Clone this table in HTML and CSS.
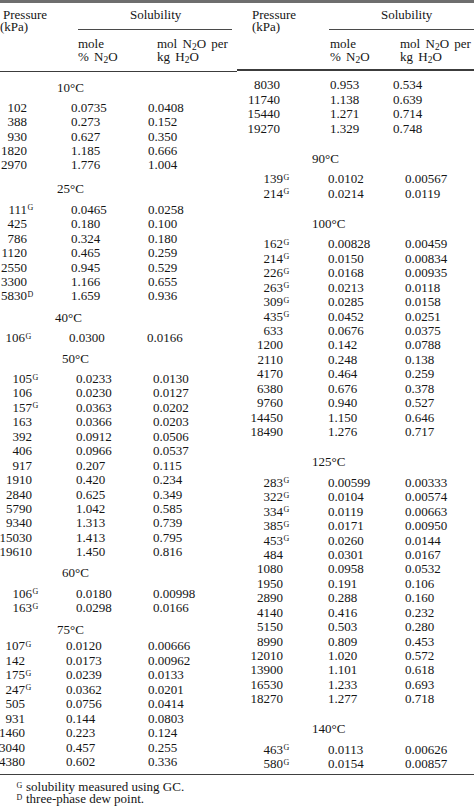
FILE: index.html
```html
<!DOCTYPE html>
<html>
<head>
<meta charset="utf-8">
<link rel="stylesheet" href="styles.css">
</head>
<body>
<div class="page">
  <div class="band"></div>
  <div class="halves">
    <section class="half left">
      <div class="head">
        <div class="hp">Pressure<span class="kpa">(kPa)</span></div>
        <div class="hs">Solubility</div>
        <div class="hm">mole<br>% N<span class="sb">2</span>O</div>
        <div class="hm">mol N<span class="sb">2</span>O per<br>kg H<span class="sb">2</span>O</div>
      </div>
      <div class="hrule"></div>
      <div class="body">
        <div class="block l-a">
          <div class="temp t-first">10°C</div>
          <div class="r"><span class="p">102</span><span class="m"></span><span class="v">0.0735</span><span class="v">0.0408</span></div>
          <div class="r"><span class="p">388</span><span class="m"></span><span class="v">0.273</span><span class="v">0.152</span></div>
          <div class="r"><span class="p">930</span><span class="m"></span><span class="v">0.627</span><span class="v">0.350</span></div>
          <div class="r"><span class="p">1820</span><span class="m"></span><span class="v">1.185</span><span class="v">0.666</span></div>
          <div class="r"><span class="p">2970</span><span class="m"></span><span class="v">1.776</span><span class="v">1.004</span></div>
        </div>
        <div class="block l-a">
          <div class="temp t-loose">25°C</div>
          <div class="r"><span class="p">111</span><span class="m"><span class="mk">G</span></span><span class="v">0.0465</span><span class="v">0.0258</span></div>
          <div class="r"><span class="p">425</span><span class="m"></span><span class="v">0.180</span><span class="v">0.100</span></div>
          <div class="r"><span class="p">786</span><span class="m"></span><span class="v">0.324</span><span class="v">0.180</span></div>
          <div class="r"><span class="p">1120</span><span class="m"></span><span class="v">0.465</span><span class="v">0.259</span></div>
          <div class="r"><span class="p">2550</span><span class="m"></span><span class="v">0.945</span><span class="v">0.529</span></div>
          <div class="r"><span class="p">3300</span><span class="m"></span><span class="v">1.166</span><span class="v">0.655</span></div>
          <div class="r"><span class="p">5830</span><span class="m"><span class="mk">D</span></span><span class="v">1.659</span><span class="v">0.936</span></div>
        </div>
        <div class="block l-b">
          <div class="temp">40°C</div>
          <div class="r"><span class="p">106</span><span class="m"><span class="mk">G</span></span><span class="v">0.0300</span><span class="v">0.0166</span></div>
        </div>
        <div class="block l-c">
          <div class="temp t-close">50°C</div>
          <div class="r"><span class="p">105</span><span class="m"><span class="mk">G</span></span><span class="v">0.0233</span><span class="v">0.0130</span></div>
          <div class="r"><span class="p">106</span><span class="m"></span><span class="v">0.0230</span><span class="v">0.0127</span></div>
          <div class="r"><span class="p">157</span><span class="m"><span class="mk">G</span></span><span class="v">0.0363</span><span class="v">0.0202</span></div>
          <div class="r"><span class="p">163</span><span class="m"></span><span class="v">0.0366</span><span class="v">0.0203</span></div>
          <div class="r"><span class="p">392</span><span class="m"></span><span class="v">0.0912</span><span class="v">0.0506</span></div>
          <div class="r"><span class="p">406</span><span class="m"></span><span class="v">0.0966</span><span class="v">0.0537</span></div>
          <div class="r"><span class="p">917</span><span class="m"></span><span class="v">0.207</span><span class="v">0.115</span></div>
          <div class="r"><span class="p">1910</span><span class="m"></span><span class="v">0.420</span><span class="v">0.234</span></div>
          <div class="r"><span class="p">2840</span><span class="m"></span><span class="v">0.625</span><span class="v">0.349</span></div>
          <div class="r"><span class="p">5790</span><span class="m"></span><span class="v">1.042</span><span class="v">0.585</span></div>
          <div class="r"><span class="p">9340</span><span class="m"></span><span class="v">1.313</span><span class="v">0.739</span></div>
          <div class="r"><span class="p">15030</span><span class="m"></span><span class="v">1.413</span><span class="v">0.795</span></div>
          <div class="r"><span class="p">19610</span><span class="m"></span><span class="v">1.450</span><span class="v">0.816</span></div>
        </div>
        <div class="block l-c">
          <div class="temp t-close t-low">60°C</div>
          <div class="r"><span class="p">106</span><span class="m"><span class="mk">G</span></span><span class="v">0.0180</span><span class="v">0.00998</span></div>
          <div class="r"><span class="p">163</span><span class="m"><span class="mk">G</span></span><span class="v">0.0298</span><span class="v">0.0166</span></div>
        </div>
        <div class="block l-d">
          <div class="temp t-tight">75°C</div>
          <div class="r"><span class="p">107</span><span class="m"><span class="mk">G</span></span><span class="v">0.0120</span><span class="v">0.00666</span></div>
          <div class="r"><span class="p">142</span><span class="m"></span><span class="v">0.0173</span><span class="v">0.00962</span></div>
          <div class="r"><span class="p">175</span><span class="m"><span class="mk">G</span></span><span class="v">0.0239</span><span class="v">0.0133</span></div>
          <div class="r"><span class="p">247</span><span class="m"><span class="mk">G</span></span><span class="v">0.0362</span><span class="v">0.0201</span></div>
          <div class="r"><span class="p">505</span><span class="m"></span><span class="v">0.0756</span><span class="v">0.0414</span></div>
          <div class="r"><span class="p">931</span><span class="m"></span><span class="v">0.144</span><span class="v">0.0803</span></div>
          <div class="r"><span class="p">1460</span><span class="m"></span><span class="v">0.223</span><span class="v">0.124</span></div>
          <div class="r"><span class="p">3040</span><span class="m"></span><span class="v">0.457</span><span class="v">0.255</span></div>
          <div class="r"><span class="p">4380</span><span class="m"></span><span class="v">0.602</span><span class="v">0.336</span></div>
        </div>
      </div>
    </section>
    <section class="half right">
      <div class="head">
        <div class="hp">Pressure<span class="kpa">(kPa)</span></div>
        <div class="hs">Solubility</div>
        <div class="hm">mole<br>% N<span class="sb">2</span>O</div>
        <div class="hm">mol N<span class="sb">2</span>O per<br>kg H<span class="sb">2</span>O</div>
      </div>
      <div class="hrule"></div>
      <div class="body">
        <div class="block r-a">
          <div class="r"><span class="p">8030</span><span class="m"></span><span class="v">0.953</span><span class="v">0.534</span></div>
          <div class="r"><span class="p">11740</span><span class="m"></span><span class="v">1.138</span><span class="v">0.639</span></div>
          <div class="r"><span class="p">15440</span><span class="m"></span><span class="v">1.271</span><span class="v">0.714</span></div>
          <div class="r"><span class="p">19270</span><span class="m"></span><span class="v">1.329</span><span class="v">0.748</span></div>
        </div>
        <div class="block r-b">
          <div class="temp">90°C</div>
          <div class="r"><span class="p">139</span><span class="m"><span class="mk">G</span></span><span class="v">0.0102</span><span class="v">0.00567</span></div>
          <div class="r"><span class="p">214</span><span class="m"><span class="mk">G</span></span><span class="v">0.0214</span><span class="v">0.0119</span></div>
        </div>
        <div class="block r-b">
          <div class="temp">100°C</div>
          <div class="r"><span class="p">162</span><span class="m"><span class="mk">G</span></span><span class="v">0.00828</span><span class="v">0.00459</span></div>
          <div class="r"><span class="p">214</span><span class="m"><span class="mk">G</span></span><span class="v">0.0150</span><span class="v">0.00834</span></div>
          <div class="r"><span class="p">226</span><span class="m"><span class="mk">G</span></span><span class="v">0.0168</span><span class="v">0.00935</span></div>
          <div class="r"><span class="p">263</span><span class="m"><span class="mk">G</span></span><span class="v">0.0213</span><span class="v">0.0118</span></div>
          <div class="r"><span class="p">309</span><span class="m"><span class="mk">G</span></span><span class="v">0.0285</span><span class="v">0.0158</span></div>
          <div class="r"><span class="p">435</span><span class="m"><span class="mk">G</span></span><span class="v">0.0452</span><span class="v">0.0251</span></div>
          <div class="r"><span class="p">633</span><span class="m"></span><span class="v">0.0676</span><span class="v">0.0375</span></div>
          <div class="r"><span class="p">1200</span><span class="m"></span><span class="v">0.142</span><span class="v">0.0788</span></div>
          <div class="r"><span class="p">2110</span><span class="m"></span><span class="v">0.248</span><span class="v">0.138</span></div>
          <div class="r"><span class="p">4170</span><span class="m"></span><span class="v">0.464</span><span class="v">0.259</span></div>
          <div class="r"><span class="p">6380</span><span class="m"></span><span class="v">0.676</span><span class="v">0.378</span></div>
          <div class="r"><span class="p">9760</span><span class="m"></span><span class="v">0.940</span><span class="v">0.527</span></div>
          <div class="r"><span class="p">14450</span><span class="m"></span><span class="v">1.150</span><span class="v">0.646</span></div>
          <div class="r"><span class="p">18490</span><span class="m"></span><span class="v">1.276</span><span class="v">0.717</span></div>
        </div>
        <div class="block r-b">
          <div class="temp">125°C</div>
          <div class="r"><span class="p">283</span><span class="m"><span class="mk">G</span></span><span class="v">0.00599</span><span class="v">0.00333</span></div>
          <div class="r"><span class="p">322</span><span class="m"><span class="mk">G</span></span><span class="v">0.0104</span><span class="v">0.00574</span></div>
          <div class="r"><span class="p">334</span><span class="m"><span class="mk">G</span></span><span class="v">0.0119</span><span class="v">0.00663</span></div>
          <div class="r"><span class="p">385</span><span class="m"><span class="mk">G</span></span><span class="v">0.0171</span><span class="v">0.00950</span></div>
          <div class="r"><span class="p">453</span><span class="m"><span class="mk">G</span></span><span class="v">0.0260</span><span class="v">0.0144</span></div>
          <div class="r"><span class="p">484</span><span class="m"></span><span class="v">0.0301</span><span class="v">0.0167</span></div>
          <div class="r"><span class="p">1080</span><span class="m"></span><span class="v">0.0958</span><span class="v">0.0532</span></div>
          <div class="r"><span class="p">1950</span><span class="m"></span><span class="v">0.191</span><span class="v">0.106</span></div>
          <div class="r"><span class="p">2890</span><span class="m"></span><span class="v">0.288</span><span class="v">0.160</span></div>
          <div class="r"><span class="p">4140</span><span class="m"></span><span class="v">0.416</span><span class="v">0.232</span></div>
          <div class="r"><span class="p">5150</span><span class="m"></span><span class="v">0.503</span><span class="v">0.280</span></div>
          <div class="r"><span class="p">8990</span><span class="m"></span><span class="v">0.809</span><span class="v">0.453</span></div>
          <div class="r"><span class="p">12010</span><span class="m"></span><span class="v">1.020</span><span class="v">0.572</span></div>
          <div class="r"><span class="p">13900</span><span class="m"></span><span class="v">1.101</span><span class="v">0.618</span></div>
          <div class="r"><span class="p">16530</span><span class="m"></span><span class="v">1.233</span><span class="v">0.693</span></div>
          <div class="r"><span class="p">18270</span><span class="m"></span><span class="v">1.277</span><span class="v">0.718</span></div>
        </div>
        <div class="block r-b">
          <div class="temp">140°C</div>
          <div class="r"><span class="p">463</span><span class="m"><span class="mk">G</span></span><span class="v">0.0113</span><span class="v">0.00626</span></div>
          <div class="r"><span class="p">580</span><span class="m"><span class="mk">G</span></span><span class="v">0.0154</span><span class="v">0.00857</span></div>
        </div>
      </div>
    </section>
  </div>
  <div class="notes">
    <div class="note"><span class="nm"><span class="mk">G</span></span><span class="nt">solubility measured using GC.</span></div>
    <div class="note"><span class="nm"><span class="mk">D</span></span><span class="nt">three-phase dew point.</span></div>
  </div>
</div>
</body>
</html>
```

FILE: styles.css
```css
html, body {
  margin: 0;
  padding: 0;
  background: #ffffff;
}

.page {
  width: 474px;
  height: 812px;
  overflow: hidden;
  font-family: "Liberation Serif", "Times New Roman", serif;
  font-size: 13px;
  color: #151515;
}

.band {
  height: 3px;
  background: #6e6e6e;
}

.halves {
  display: flex;
  align-items: flex-start;
  padding-bottom: 2px;
}

.half {
  width: 237px;
  flex: 0 0 237px;
}

/* header */
.head {
  display: grid;
  grid-template-columns: var(--h1) var(--h2) 1fr;
  padding-top: 6px;
}

.left .head {
  --h1: 78px;
  --h2: 79px;
  margin-right: 5px;
}

.right .head {
  --h1: 92px;
  --h2: 71px;
}

.hp {
  grid-row: 1 / span 2;
  grid-column: 1;
  line-height: 12px;
  white-space: nowrap;
}

.left .hp {
  padding-left: 3px;
}

.right .hp {
  padding-left: 15px;
}

.kpa {
  display: block;
}

.left .kpa {
  margin-left: -3px;
}

.hs {
  grid-column: 2 / span 2;
  grid-row: 1;
  line-height: 12px;
  padding-left: 52px;
  padding-bottom: 7.5px;
  border-bottom: 1px solid #4a4a4a;
  white-space: nowrap;
}

.hm {
  grid-row: 2;
  line-height: 13.5px;
  padding-top: 7.3px;
  padding-bottom: 7px;
  white-space: nowrap;
  word-spacing: 2px;
}

.right .hm {
  padding-bottom: 5.5px;
}

.right .hm:nth-child(3) {
  padding-left: 1px;
}

.sb {
  font-size: 9.5px;
  vertical-align: -2px;
  line-height: 0;
}

.hrule {
  height: 1.5px;
  background: #3c3c3c;
}

/* body */
.right .body {
  padding-top: 7.5px;
}

.l-a { --n: 27px; --c2: 71px; --c3: 148px; --t: 57px; }
.l-b { --n: 25px; --c2: 69px; --c3: 147px; --t: 55px; }
.l-c { --n: 32px; --c2: 76px; --c3: 153px; --t: 62px; }
.l-d { --n: 25px; --c2: 66px; --c3: 148px; --t: 57px; }
.r-a { --n: 43px; --c2: 93px; --c3: 156px; --t: 75px; }
.r-b { --n: 46px; --c2: 91px; --c3: 168px; --t: 75px; }

.temp {
  line-height: 14.45px;
  height: 14.45px;
  padding-left: var(--t);
  margin-top: 7px;
  margin-bottom: 6px;
  white-space: nowrap;
}

.left .t-first { margin-top: 8.5px; margin-bottom: 5.5px; }
.left .t-loose { margin-top: 9.5px; }
.left .t-close { margin-top: 5.8px; }
.left .t-low { margin-bottom: 7px; }
.left .t-tight { margin-bottom: 2.2px; }

.right .temp {
  margin-top: 15.5px;
  margin-bottom: 6.3px;
}

.r {
  display: grid;
  grid-template-columns: var(--n) calc(var(--c2) - var(--n)) calc(var(--c3) - var(--c2)) 1fr;
  height: 14.45px;
  line-height: 14.45px;
  white-space: nowrap;
}

.p {
  display: flex;
  justify-content: flex-end;
  min-width: 0;
}

.m,
.v {
  min-width: 0;
}

.mk {
  font-size: 8px;
  vertical-align: 3.5px;
  line-height: 0;
  padding-left: 0.5px;
}

/* footnotes */
.notes {
  border-top: 1.5px solid #404040;
  padding-top: 6.6px;
}

.note {
  display: grid;
  grid-template-columns: 16px 10px 1fr;
  line-height: 12px;
  white-space: nowrap;
}

.nm {
  grid-column: 2;
}

.nt {
  grid-column: 3;
}
```
